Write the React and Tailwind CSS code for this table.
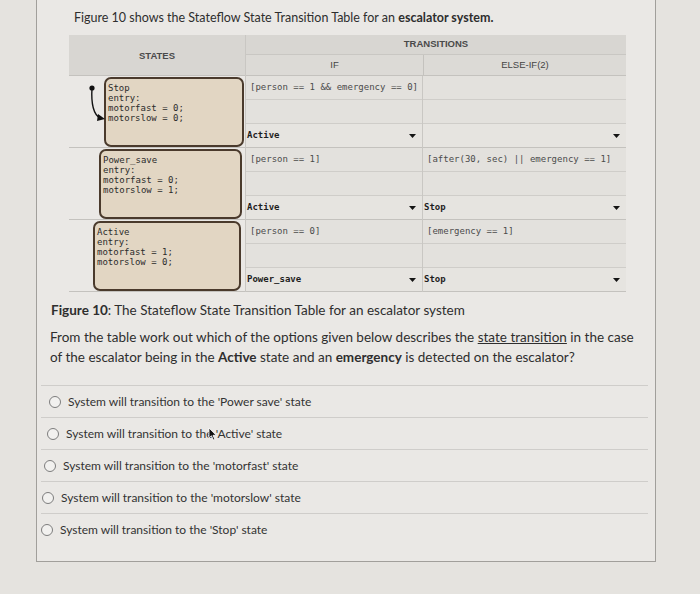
import React from 'react';

const states = [
  {
    name: 'Stop',
    fast: 0,
    slow: 0,
    box: 'ml-[35px] w-[140px]',
    ifCond: '[person == 1 && emergency == 0]',
    ifDest: 'Active',
    elseCond: '',
    elseDest: '',
    initial: true,
  },
  {
    name: 'Power_save',
    fast: 0,
    slow: 1,
    box: 'ml-[30px] w-[143px]',
    ifCond: '[person == 1]',
    ifDest: 'Active',
    elseCond: '[after(30, sec) || emergency == 1]',
    elseDest: 'Stop',
  },
  {
    name: 'Active',
    fast: 1,
    slow: 0,
    box: 'ml-[24px] w-[148px]',
    ifCond: '[person == 0]',
    ifDest: 'Power_save',
    elseCond: '[emergency == 1]',
    elseDest: 'Stop',
  },
];

const options = [
  { label: "System will transition to the 'Power save' state", pad: 'pl-[8px]' },
  { label: "System will transition to the 'Active' state", pad: 'pl-[6px]', cursor: true },
  { label: "System will transition to the 'motorfast' state", pad: 'pl-[3px]' },
  { label: "System will transition to the 'motorslow' state", pad: 'pl-[1px]' },
  { label: "System will transition to the 'Stop' state", pad: 'pl-0' },
];

const Caret = () => (
  <svg width="7" height="4" viewBox="0 0 7 4" className="shrink-0">
    <path d="M0 0h7L3.5 4z" fill="#141414" />
  </svg>
);

// one column of transitions: condition / action / destination
const TransCell = ({ cond, dest, width }) => (
  <div className={`flex flex-col ${width} border-l border-[#c9c7c3]`}>
    <div className="h-[24px] flex items-center px-[4px] border-b border-[#cfcdc9] bg-[#e3e1dd] text-[#4b4b4b] whitespace-nowrap">
      {cond}
    </div>
    <div className="h-[24px] border-b border-[#cfcdc9] bg-[#e3e1dd]" />
    <div className="h-[24px] flex items-center justify-between pl-[1px] pr-[6px] border-b border-[#c4c2be] bg-[#e6e4e0]">
      <span className="font-bold text-[#1e1e1e]">{dest}</span>
      <Caret />
    </div>
  </div>
);

const StateBox = ({ s }) => (
  <div className="relative w-[176px] h-[72px] flex items-center border-b border-[#c4c2be]">
    {s.initial && (
      <svg className="absolute left-[16px] top-[6px]" width="22" height="44" viewBox="0 0 22 44">
        <circle cx="7" cy="6" r="2.6" fill="#111" />
        <path d="M7 6 C6 22 8 32 15 36" stroke="#111" strokeWidth="1.4" fill="none" />
        <path d="M13 32 L20 37 L12 39 Z" fill="#111" />
      </svg>
    )}
    <div className={`${s.box} h-[70px] rounded-[7px] border-2 border-[#4a3a2c] bg-[#e2d6c3] pl-[2px] pt-[4px] text-[9px] leading-[10px] text-[#2b2b2b]`}>
      <div>{s.name}</div>
      <div>entry:</div>
      <div>motorfast = {s.fast};</div>
      <div>motorslow = {s.slow};</div>
    </div>
  </div>
);

export default function App() {
  return (
    <div className="w-[700px] h-[594px] bg-[#e5e3df] overflow-hidden font-['Lato',sans-serif] text-[#2e2e2e]">
      <div className="relative ml-[36px] w-[620px] h-[562px] border-x border-b border-[#a19f9b] bg-[#eae8e5]">
        <p className="pl-[37px] pt-[10px] h-[35px] text-[12.5px] leading-[16px]">
          Figure 10 shows the Stateflow State Transition Table for an{' '}
          <span className="font-bold">escalator system.</span>
        </p>

        {/* state transition table */}
        <div className="ml-[32px] w-[557px] font-['DejaVu_Sans_Mono',monospace] text-[9px]">
          <div className="flex font-['Liberation_Sans',sans-serif] font-bold text-[9.5px] text-[#4a4a4a]">
            <div className="w-[176px] h-[41px] pt-[3px] flex items-center justify-center bg-[#d8d6d2] border-b border-[#c4c2be]">
              STATES
            </div>
            <div className="flex-1 flex flex-col border-l border-[#c9c7c3]">
              <div className="h-[20px] flex items-center justify-center bg-[#d8d6d2] border-b border-[#c9c7c3]">
                TRANSITIONS
              </div>
              <div className="h-[21px] flex font-normal text-[#444]">
                <div className="w-[177px] flex items-center justify-center bg-[#dcdad6] border-b border-[#c4c2be]">IF</div>
                <div className="flex-1 flex items-center justify-center bg-[#dcdad6] border-l border-b border-[#c4c2be]">
                  ELSE-IF(2)
                </div>
              </div>
            </div>
          </div>

          {states.map((s) => (
            <div key={s.name} className="flex">
              <StateBox s={s} />
              <TransCell cond={s.ifCond} dest={s.ifDest} width="w-[177px]" />
              <TransCell cond={s.elseCond} dest={s.elseDest} width="flex-1" />
            </div>
          ))}
        </div>

        <p className="pl-[14px] pt-[8px] text-[13.5px] leading-[20px]">
          <span className="font-bold">Figure 10</span>: The Stateflow State Transition Table for an escalator system
        </p>
        <p className="pl-[13px] pt-[7px] text-[13.5px] leading-[20px] whitespace-nowrap">
          From the table work out which of the options given below describes the{' '}
          <span className="underline">state transition</span> in the case
          <br />
          of the escalator being in the <span className="font-bold">Active</span> state and an{' '}
          <span className="font-bold">emergency</span> is detected on the escalator?
        </p>

        <div className="mt-[18px] ml-[4px] mr-[7px] border-t border-[#cfcdca]">
          {options.map((o, i) => (
            <div
              key={o.label}
              className={`relative h-[32px] flex items-center gap-[7px] ${o.pad} ${i < options.length - 1 ? 'border-b border-[#cfcdca]' : ''}`}
            >
              <span className="w-[12px] h-[12px] rounded-full border border-[#7d7d7d] bg-[#f2f1ef]" />
              <span className="text-[12px] text-[#333]">{o.label}</span>
              {o.cursor && (
                <svg className="absolute left-[167px] top-[9px]" width="9" height="14" viewBox="0 0 9 14">
                  <path d="M1 1 L1 11 L3.5 8.8 L5.3 13 L6.8 12.3 L5 8.3 L8.2 8.3 Z" fill="#111" stroke="#fff" strokeWidth="0.8" />
                </svg>
              )}
            </div>
          ))}
        </div>
      </div>
    </div>
  );
}
